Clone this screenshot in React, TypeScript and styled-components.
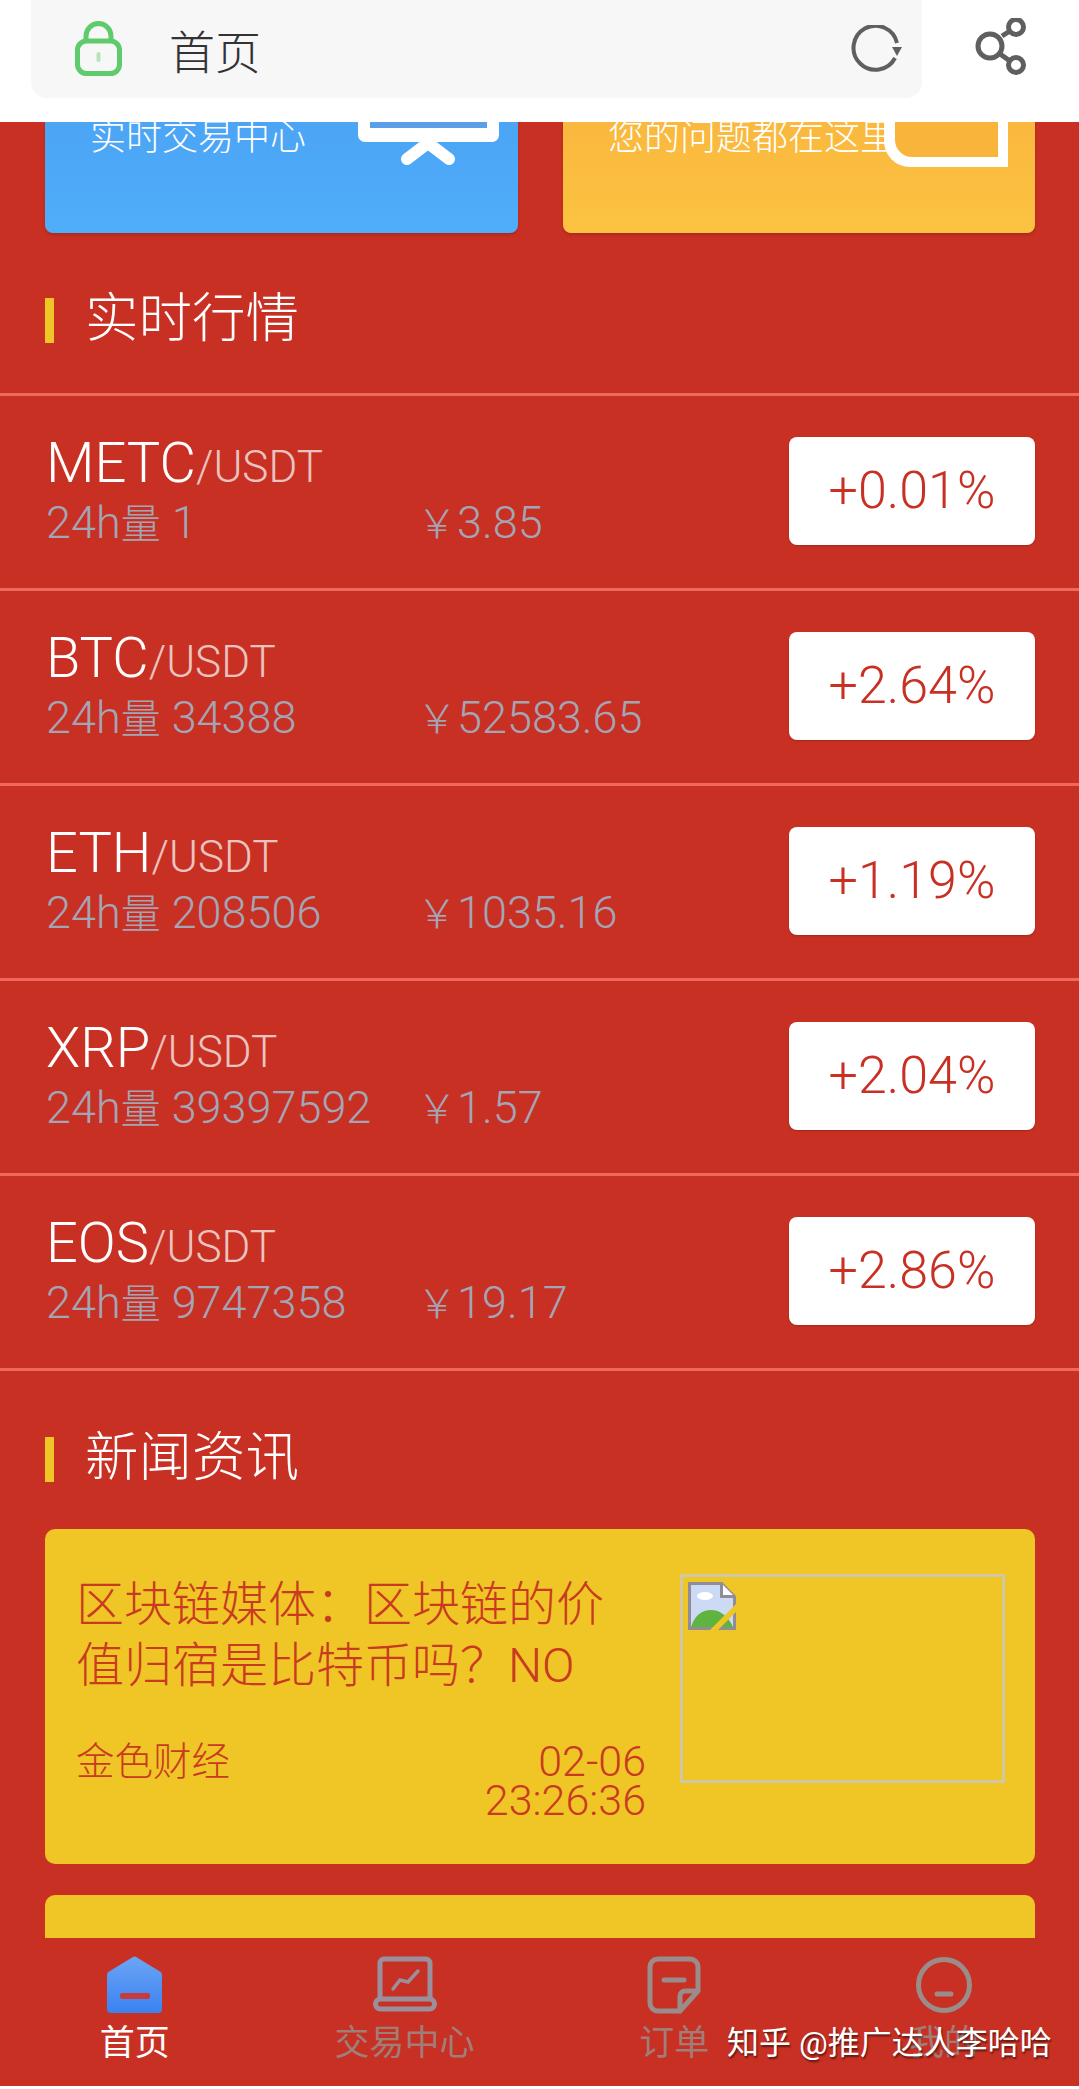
import styled, { createGlobalStyle } from 'styled-components';

const GlobalStyle = createGlobalStyle`
  html, body {
    margin: 0;
    padding: 0;
    background: #fff;
  }
  * {
    box-sizing: border-box;
  }
`;

const Page = styled.div`
  position: relative;
  width: 1079px;
  height: 2089px;
  display: flex;
  flex-direction: column;
  overflow: hidden;
  background: #fff;
  font-family: Roboto, 'Noto Sans CJK SC', sans-serif;
`;

const Header = styled.header`
  height: 122px;
  flex: none;
  display: flex;
  align-items: flex-start;
  padding-left: 31px;
  background: #fff;
`;

const AddressBar = styled.div`
  width: 891px;
  height: 98px;
  display: flex;
  align-items: center;
  padding: 0 19px 0 44px;
  background: #f7f7f7;
  border-radius: 0 0 16px 16px;
`;

const PageName = styled.span`
  margin-left: 47px;
  flex: 1;
  font-size: 46px;
  font-weight: 300;
  color: #333;
`;

const ShareButton = styled.div`
  margin: 18px 0 0 53px;
  display: flex;
`;

const Main = styled.main`
  flex: 1;
  min-height: 0;
  overflow: hidden;
  background: #c93024;
`;

const QuickCards = styled.div`
  display: grid;
  grid-template-columns: 473px 472px;
  gap: 45px;
  margin: -60px 44px 0 45px;
`;

const QuickCard = styled.div<{ $from: string; $to: string }>`
  position: relative;
  height: 171px;
  padding: 54px 0 0 45px;
  font-size: 36px;
  font-weight: 300;
  line-height: 44px;
  color: #fff;
  white-space: nowrap;
  background: linear-gradient(${(p) => p.$from}, ${(p) => p.$to});
  border-radius: 8px;
  box-shadow: 0 2px 3px rgba(0, 0, 0, 0.15);
`;

const QuickIcon = styled.svg<{ $right: number; $bottom: number }>`
  position: absolute;
  right: ${(p) => p.$right}px;
  bottom: ${(p) => p.$bottom}px;
`;

const SectionTitle = styled.h2<{ $top: number; $bottom: number }>`
  display: flex;
  align-items: center;
  gap: 31px;
  height: 56px;
  margin: ${(p) => p.$top}px 0 ${(p) => p.$bottom}px 45px;
  font-size: 53.5px;
  font-weight: 300;
  line-height: 56px;
  color: #fff;

  &::before {
    content: '';
    width: 9px;
    height: 45px;
    margin-top: 2px;
    background: #efc626;
  }
`;

const MarketList = styled.div`
  border-top: 3px solid #f0685c;
`;

const MarketRow = styled.div`
  height: 195px;
  display: flex;
  align-items: center;
  justify-content: space-between;
  padding: 0 44px 7px 46px;
  border-bottom: 3px solid #f0685c;
`;

const Pair = styled.div`
  display: flex;
  align-items: baseline;
  height: 62px;
  font-size: 56px;
  font-weight: 300;
  line-height: 62px;
  color: #fff;
`;

const Quote = styled.span`
  font-size: 44px;
  color: #e9c3bf;
`;

const Stats = styled.div`
  display: flex;
  align-items: baseline;
  height: 46px;
  margin-top: 6px;
  font-size: 45px;
  font-weight: 300;
  line-height: 46px;
  color: #a3a5b5;
`;

const Unit = styled.span`
  font-size: 40px;
`;

const Volume = styled.span`
  width: 371px;
`;

const Change = styled.div`
  width: 246px;
  height: 108px;
  margin-top: 4px;
  display: flex;
  align-items: center;
  justify-content: center;
  font-size: 52px;
  font-weight: 300;
  color: #c93024;
  background: #fff;
  border-radius: 8px;
  box-shadow: 0 1px 2px rgba(0, 0, 0, 0.2);
`;

const NewsCard = styled.article`
  display: flex;
  gap: 34px;
  height: 335px;
  margin: 0 44px 31px 45px;
  padding: 45px 30px 0 31px;
  color: #c93b20;
  background: #efc626;
  border-radius: 10px;
`;

const NewsBody = styled.div`
  width: 570px;
  flex: none;
`;

const NewsTitle = styled.div`
  width: 540px;
  font-size: 48px;
  font-weight: 300;
  line-height: 61px;
`;

const NewsMeta = styled.div`
  display: flex;
  justify-content: space-between;
  margin-top: 46px;
`;

const Source = styled.span`
  font-size: 38.5px;
  font-weight: 300;
  line-height: 40px;
`;

const Time = styled.div`
  font-size: 43px;
  font-weight: 300;
  line-height: 39px;
  text-align: right;
`;

const BrokenImage = styled.div`
  width: 325px;
  height: 209px;
  padding: 5px;
  border: 3px solid #d2c7a4;
`;

const TabBar = styled.nav`
  height: 148px;
  flex: none;
  display: grid;
  grid-template-columns: repeat(4, 1fr);
  margin-bottom: 3px;
  background: #c93024;
`;

const Tab = styled.div<{ $active?: boolean }>`
  display: flex;
  flex-direction: column;
  align-items: center;
  padding-top: 18px;
  font-size: 35px;
  line-height: 44px;
  color: ${(p) => (p.$active ? '#fff' : '#a17d78')};
`;

const TabIcon = styled.svg`
  height: 58px;
  margin-bottom: 8px;
`;

const Watermark = styled.div`
  position: absolute;
  left: 727px;
  top: 2023px;
  font-size: 32px;
  line-height: 40px;
  color: #fff;
  white-space: nowrap;
  text-shadow: 1px 2px 2px rgba(0, 0, 0, 0.55);
`;

const markets = [
  { base: 'METC', volume: '1', price: '3.85', change: '+0.01%' },
  { base: 'BTC', volume: '34388', price: '52583.65', change: '+2.64%' },
  { base: 'ETH', volume: '208506', price: '1035.16', change: '+1.19%' },
  { base: 'XRP', volume: '39397592', price: '1.57', change: '+2.04%' },
  { base: 'EOS', volume: '9747358', price: '19.17', change: '+2.86%' },
];

const LockIcon = () => (
  <svg width="47" height="57" viewBox="0 0 47 57" fill="none" stroke="#5fcb6c" strokeWidth="5">
    <rect x="2.5" y="20" width="42" height="32.5" rx="9" />
    <path d="M11 20v-5a12.5 12.5 0 0 1 25 0v5" />
    <path d="M23.5 33v6" stroke="#b5e3ba" strokeWidth="4" strokeLinecap="round" />
  </svg>
);

const RefreshIcon = () => (
  <svg width="53" height="48" viewBox="0 0 53 48" fill="none">
    <path d="M45 33a22 22 0 1 1 2-15" stroke="#5f5f5f" strokeWidth="4" />
    <path d="M42 22h10l-5 9z" fill="#5f5f5f" />
  </svg>
);

const ShareIcon = () => (
  <svg width="51" height="57" viewBox="0 0 51 57" fill="none" stroke="#5f5f5f" strokeWidth="5">
    <circle cx="15" cy="28" r="12" />
    <circle cx="41" cy="9" r="7.5" />
    <circle cx="41" cy="47" r="7.5" />
    <path d="M27 18l8-5M25 36l10 7" />
  </svg>
);

const MonitorIcon = () => (
  <QuickIcon $right={19} $bottom={68} width="141" height="100" viewBox="0 0 141 100" fill="none">
    <path d="M0 0h141v70a7 7 0 0 1-7 7H7a7 7 0 0 1-7-7z" fill="#fff" />
    <rect x="12" y="0" width="117" height="63" fill="#5b9fe8" />
    <path d="M49 94l21-16 21 16" stroke="#fff" strokeWidth="12" strokeLinecap="round" />
  </QuickIcon>
);

const QuestionIcon = () => (
  <QuickIcon $right={27} $bottom={66} width="124" height="100" viewBox="0 0 124 100" fill="none">
    <path d="M0 0h124v100H26A26 26 0 0 1 0 74z" fill="#fff" />
    <path d="M11 0h103v90H28A17 17 0 0 1 11 73z" fill="#f9b43c" />
  </QuickIcon>
);

const MissingImageIcon = () => (
  <svg width="48" height="48" viewBox="0 0 48 48">
    <path d="M1.5 1.5h32l13 13v32h-45z" fill="#cddaf5" stroke="#8e8d98" strokeWidth="3" />
    <path d="M33.5 1.5v13h13" fill="#fff" stroke="#8e8d98" strokeWidth="3" />
    <ellipse cx="17" cy="14" rx="8" ry="4" fill="#fff" />
    <path d="M3 45c4-12 11-17 20-17s17 6 22 17z" fill="#5fb33f" />
    <path d="M22 48l26-26v8L30 48z" fill="#efc626" />
  </svg>
);

const HomeIcon = () => (
  <TabIcon width="55" viewBox="0 0 55 58">
    <defs>
      <linearGradient id="homeFill" x1="0" y1="0" x2="0" y2="1">
        <stop offset="0" stopColor="#6ba5f4" />
        <stop offset="1" stopColor="#3a82f2" />
      </linearGradient>
    </defs>
    <path
      d="M25.5 1.2a4 4 0 0 1 4 0l23 14a4 4 0 0 1 2.500 3.500V53a4 4 0 0 1-4 4H4a4 4 0 0 1-4-4V18.700a4 4 0 0 1 2.500-3.500z"
      fill="url(#homeFill)"
    />
    <rect x="13" y="37" width="30" height="6" rx="2" fill="#c93a3c" />
  </TabIcon>
);

const TradeIcon = () => (
  <TabIcon width="64" viewBox="0 0 64 58" fill="none" stroke="#9a8f9c" strokeWidth="5">
    <path d="M7 43V7a4 4 0 0 1 4-4h42a4 4 0 0 1 4 4v36" />
    <rect x="2.500" y="43" width="59" height="10" rx="5" />
    <path d="M20 33l7-9 8 2 10-11" strokeWidth="3.500" strokeLinecap="round" />
  </TabIcon>
);

const OrderIcon = () => (
  <TabIcon width="54" viewBox="0 0 54 58" fill="none" stroke="#9a8c8b" strokeWidth="5">
    <path d="M33 55H11a8 8 0 0 1-8-8V11a8 8 0 0 1 8-8h32a8 8 0 0 1 8 8v24z" />
    <path d="M33 55V40a5 5 0 0 1 5-5h13" />
    <path d="M17 24h20" strokeLinecap="round" />
  </TabIcon>
);

const MineIcon = () => (
  <TabIcon width="56" viewBox="0 0 56 58" fill="none" stroke="#9a8c8b" strokeWidth="5">
    <circle cx="28" cy="29" r="25.500" />
    <path d="M21 38h14" strokeLinecap="round" />
  </TabIcon>
);

export default function App() {
  return (
    <Page>
      <GlobalStyle />
      <Header>
        <AddressBar>
          <LockIcon />
          <PageName>首页</PageName>
          <RefreshIcon />
        </AddressBar>
        <ShareButton>
          <ShareIcon />
        </ShareButton>
      </Header>

      <Main>
        <QuickCards>
          <QuickCard $from="#4a9ff2" $to="#4faefa">
            实时交易中心
            <MonitorIcon />
          </QuickCard>
          <QuickCard $from="#f8b23c" $to="#fcc341">
            您的问题都在这里
            <QuestionIcon />
          </QuickCard>
        </QuickCards>

        <SectionTitle $top={58} $bottom={46}>实时行情</SectionTitle>
        <MarketList>
          {markets.map((m) => (
            <MarketRow key={m.base}>
              <div>
                <Pair>
                  {m.base}
                  <Quote>/USDT</Quote>
                </Pair>
                <Stats>
                  <Volume>
                    24h<Unit>量</Unit> {m.volume}
                  </Volume>
                  <span>
                    <Unit>￥</Unit>
                    {m.price}
                  </span>
                </Stats>
              </div>
              <Change>{m.change}</Change>
            </MarketRow>
          ))}
        </MarketList>

        <SectionTitle $top={59} $bottom={43}>新闻资讯</SectionTitle>
        <NewsCard>
          <NewsBody>
            <NewsTitle>区块链媒体：区块链的价值归宿是比特币吗？NO</NewsTitle>
            <NewsMeta>
              <Source>金色财经</Source>
              <Time>
                02-06
                <br />
                23:26:36
              </Time>
            </NewsMeta>
          </NewsBody>
          <BrokenImage>
            <MissingImageIcon />
          </BrokenImage>
        </NewsCard>
        <NewsCard />
      </Main>

      <TabBar>
        <Tab $active>
          <HomeIcon />
          首页
        </Tab>
        <Tab>
          <TradeIcon />
          交易中心
        </Tab>
        <Tab>
          <OrderIcon />
          订单
        </Tab>
        <Tab>
          <MineIcon />
          我的
        </Tab>
      </TabBar>

      <Watermark>知乎 @推广达人李哈哈</Watermark>
    </Page>
  );
}
